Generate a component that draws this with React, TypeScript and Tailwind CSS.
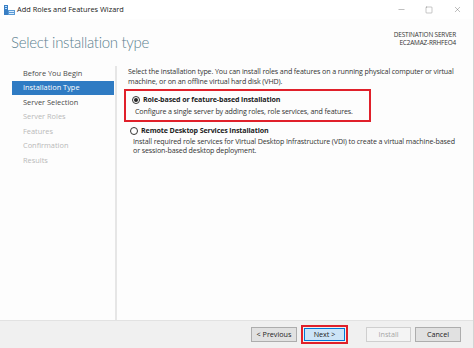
import { Minus, Square, X } from "lucide-react";

const steps = [
  { label: "Before You Begin", state: "done" },
  { label: "Installation Type", state: "active" },
  { label: "Server Selection", state: "done" },
  { label: "Server Roles", state: "off" },
  { label: "Features", state: "off" },
  { label: "Confirmation", state: "off" },
  { label: "Results", state: "off" },
];

function WizardIcon() {
  return (
    <svg width="11" height="10" viewBox="0 0 11 10">
      <rect x="0" y="0" width="4" height="10" fill="#3a7fc4" />
      <rect x="1" y="1" width="2" height="1" fill="#bfe0ff" />
      <rect x="1" y="3" width="2" height="1" fill="#bfe0ff" />
      <rect x="4" y="5" width="7" height="5" fill="#5b9bd5" />
      <rect x="5" y="6" width="5" height="1" fill="#d9ecff" />
      <rect x="5" y="8" width="5" height="1" fill="#d9ecff" />
    </svg>
  );
}

function Radio({ checked }: { checked?: boolean }) {
  return (
    <span className="flex h-[8px] w-[8px] shrink-0 items-center justify-center rounded-full border border-[#333] bg-white">
      {checked && <span className="h-[4px] w-[4px] rounded-full bg-[#222]" />}
    </span>
  );
}

export default function App() {
  return (
    <div
      className="flex h-[348px] w-[474px] flex-col overflow-hidden border-r border-[#d4d4d4] bg-[#fdfdfd] text-[#333]"
      style={{ fontFamily: '"Open Sans", "Noto Sans", sans-serif' }}
    >
      {/* title bar */}
      <div className="flex h-[19px] shrink-0 items-center bg-white">
        <div className="ml-[4px] flex items-center gap-[2px] pt-[1px]">
          <WizardIcon />
          <span className="text-[7.4px] text-[#222]">Add Roles and Features Wizard</span>
        </div>
        <div className="ml-auto flex items-center text-[#555]">
          <span className="flex w-[28px] justify-center">
            <Minus size={9} strokeWidth={1} />
          </span>
          <span className="flex w-[28px] justify-center">
            <Square size={8} strokeWidth={1} />
          </span>
          <span className="mr-[2px] flex w-[28px] justify-center">
            <X size={9} strokeWidth={1} />
          </span>
        </div>
      </div>

      {/* header */}
      <div className="flex h-[47px] shrink-0 items-start justify-between pl-[11px] pr-[17px]">
        <h1
          className="mt-[12px] text-[15px] font-light leading-[22px] tracking-[-0.3px] text-[#5b7f8f]"
          style={{ fontFamily: 'Lato, "Open Sans", sans-serif' }}
        >
          Select installation type
        </h1>
        <div className="mt-[12px] text-right text-[6.4px] leading-[8px] tracking-[-0.15px] text-[#333]">
          <div>DESTINATION SERVER</div>
          <div>EC2AMAZ-RRHFEO4</div>
        </div>
      </div>

      {/* body */}
      <div className="flex flex-1">
        <nav className="w-[117px] shrink-0 border-r-2 border-[#e6e6e6] pl-[12px] pr-[1px]">
          {steps.map((s) => (
            <div
              key={s.label}
              className={
                s.state === "active"
                  ? "flex h-[14.5px] items-center bg-[#2f7bc3] pl-[11px] text-[7.4px] text-white"
                  : s.state === "done"
                    ? "flex h-[14.5px] items-center pl-[11px] text-[7.4px] text-[#4a4a4a]"
                    : "flex h-[14.5px] items-center pl-[11px] text-[7.4px] text-[#b9b9b9]"
              }
            >
              {s.label}
            </div>
          ))}
        </nav>

        <div className="flex-1 pl-[11px] pr-[14px] pt-[1px] text-[7.1px] leading-[9.5px] tracking-[-0.12px] text-[#333]">
          <p className="pr-[2px]">
            Select the installation type. You can install roles and features on a running physical computer or virtual
            machine, or on an offline virtual hard disk (VHD).
          </p>

          <div className="-ml-[4px] mt-[3px] w-[247px] border-2 border-[#e0202a] pb-[4px] pl-[6px] pt-[4px]">
            <div className="flex items-center gap-[3px]">
              <Radio checked />
              <span className="font-bold text-[#222]">Role-based or feature-based installation</span>
            </div>
            <div className="mt-[2px] pl-[3px]">Configure a single server by adding roles, role services, and features.</div>
          </div>

          <div className="ml-[2px] mt-[4px]">
            <div className="flex items-center gap-[3px]">
              <Radio />
              <span className="font-bold text-[#222]">Remote Desktop Services installation</span>
            </div>
            <div className="mt-[1px] pl-[3px]">
              Install required role services for Virtual Desktop Infrastructure (VDI) to create a virtual machine-based
              <br />
              or session-based desktop deployment.
            </div>
          </div>
        </div>
      </div>

      {/* footer */}
      <div className="flex h-[28px] shrink-0 items-center justify-end border-t border-[#e2e2e2] bg-[#f0f0f0] pr-[12px] text-[7.2px]">
        <button className="h-[15px] w-[46px] border border-[#adadad] bg-[#e1e1e1] text-[#222]">&lt; Previous</button>
        <div className="ml-[4px] border-2 border-[#e0202a] p-[1px]">
          <button className="block h-[13px] w-[41px] border border-[#0078d7] bg-[#cce4f7] text-[#222]">Next &gt;</button>
        </div>
        <button className="ml-[18px] h-[15px] w-[45px] border border-[#cfcfcf] bg-[#f4f4f4] text-[#a6a6a6]">Install</button>
        <button className="ml-[4px] h-[15px] w-[46px] border border-[#adadad] bg-[#e1e1e1] text-[#222]">Cancel</button>
      </div>
    </div>
  );
}
